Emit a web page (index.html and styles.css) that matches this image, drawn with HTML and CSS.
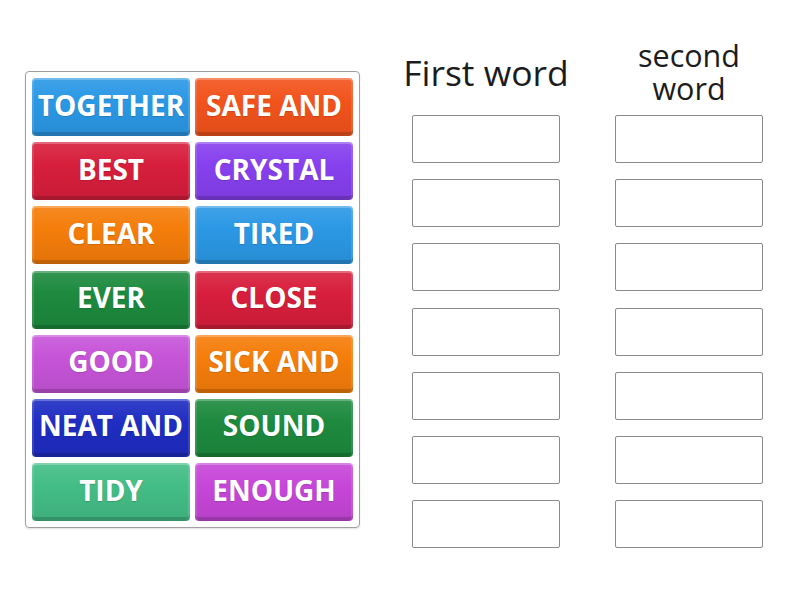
FILE: index.html
```html
<!DOCTYPE html>
<html>
<head>
<meta charset="utf-8">
<link rel="stylesheet" href="styles.css">
</head>
<body>
<div class="page">
  <div class="panel">
    <div class="tile blue">TOGETHER</div>
    <div class="tile redorange">SAFE AND</div>
    <div class="tile red">BEST</div>
    <div class="tile purple">CRYSTAL</div>
    <div class="tile orange">CLEAR</div>
    <div class="tile blue">TIRED</div>
    <div class="tile green">EVER</div>
    <div class="tile red">CLOSE</div>
    <div class="tile pink">GOOD</div>
    <div class="tile orange">SICK AND</div>
    <div class="tile navy">NEAT AND</div>
    <div class="tile green">SOUND</div>
    <div class="tile teal">TIDY</div>
    <div class="tile magenta">ENOUGH</div>
  </div>
  <div class="targets">
    <div class="column">
      <div class="head"><span class="title one">First word</span></div>
      <div class="box"></div><div class="box"></div><div class="box"></div><div class="box"></div><div class="box"></div><div class="box"></div><div class="box"></div>
    </div>
    <div class="column">
      <div class="head"><span class="title two">second word</span></div>
      <div class="box"></div><div class="box"></div><div class="box"></div><div class="box"></div><div class="box"></div><div class="box"></div><div class="box"></div>
    </div>
  </div>
</div>
</body>
</html>
```
FILE: styles.css
```css
html, body { margin: 0; padding: 0; background: #fff; }
body { font-family: "Open Sans", "Noto Sans", sans-serif; }
.page { display: flex; align-items: flex-start; width: 800px; height: 600px; }
.panel {
  margin: 71px 0 0 25px;
  border: 1px solid #a0a0a0;
  border-radius: 4px;
  padding: 6px;
  display: grid;
  grid-template-columns: 158px 158px;
  grid-auto-rows: 58px;
  column-gap: 5px;
  row-gap: 6.2px;
  box-shadow: 0 1px 2px rgba(0,0,0,0.12);
}
.tile {
  display: flex; align-items: center; justify-content: center;
  color: #fff; font-weight: 700; font-size: 28px; letter-spacing: 0;
  border-radius: 4px; white-space: nowrap;
  background-image: linear-gradient(to bottom, rgba(255,255,255,0.10), rgba(255,255,255,0) 40%, rgba(0,0,0,0.08));
  box-shadow: inset 0 2px 0 rgba(255,255,255,0.25), inset 2px 0 0 rgba(255,255,255,0.12), inset -2px 0 0 rgba(255,255,255,0.12), inset 0 -4px 0 rgba(0,0,0,0.16);
  text-shadow: 0 1px 1px rgba(0,0,0,0.15);
  padding-bottom: 5px; box-sizing: border-box;
}
.blue { background-color: #2b98e5; }
.redorange { background-color: #f2531c; }
.red { background-color: #d71e3c; }
.purple { background-color: #8740ee; }
.orange { background-color: #f57d0a; }
.green { background-color: #1d8a3e; }
.pink { background-color: #c654d8; }
.navy { background-color: #1f2dc2; }
.teal { background-color: #43bd86; }
.magenta { background-color: #c646d8; }

.targets { display: flex; gap: 55px; margin: 36px 0 0 52px; }
.column { width: 148px; display: flex; flex-direction: column; }
.head { height: 72px; display: flex; align-items: center; justify-content: center; margin-bottom: 7px; color: #1c1c1c; }
.title { text-align: center; font-weight: 400; }
.one { font-size: 35.5px; white-space: nowrap; line-height: 1.2; }
.two { font-size: 30.5px; line-height: 33px; width: 130px; }
.box {
  height: 48px; box-sizing: border-box;
  border: 1px solid #8a8a8a; border-radius: 2px;
  margin-bottom: 16.2px;
}
```
